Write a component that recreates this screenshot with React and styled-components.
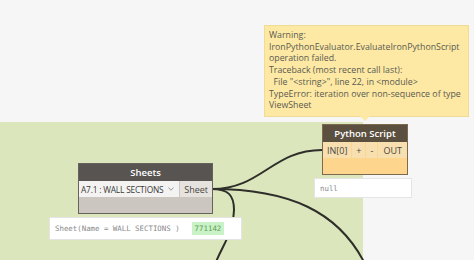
import React from "react";
import styled, { createGlobalStyle } from "styled-components";

const Global = createGlobalStyle`
  body { margin: 0; background: #f6f6f6; }
  * { box-sizing: border-box; }
`;

const Canvas = styled.div`
  position: relative;
  width: 474px;
  height: 260px;
  overflow: hidden;
  background: #f6f6f6;
  font-family: "Open Sans", "Noto Sans", sans-serif;
`;

const Group = styled.div`
  position: absolute;
  left: 0;
  top: 122px;
  width: 363px;
  height: 138px;
  background: #dce6bc;
`;

const Wires = styled.svg`
  position: absolute;
  left: 0;
  top: 0;
`;

const Tooltip = styled.div`
  position: absolute;
  left: 264px;
  top: 25px;
  width: 205px;
  height: 92px;
  padding: 4px 4px;
  background: #fde9a3;
  border: 1px solid #f0dc94;
  color: #5a5a52;
  font-size: 8.8px;
  line-height: 11.7px;
  white-space: pre;
  &::after {
    content: "";
    position: absolute;
    left: 95px;
    bottom: -5px;
    border-left: 5px solid transparent;
    border-right: 5px solid transparent;
    border-top: 5px solid #fde9a3;
  }
`;

const Node = styled.div`
  position: absolute;
  left: ${(p) => p.x}px;
  top: ${(p) => p.y}px;
  width: ${(p) => p.w}px;
  display: flex;
  flex-direction: column;
  border: 1px solid ${(p) => p.edge};
  background: ${(p) => p.body};
`;

const Header = styled.div`
  height: 17px;
  background: ${(p) => p.bg};
  color: #fff;
  font-weight: 600;
  font-size: 9.5px;
  display: flex;
  align-items: center;
  justify-content: center;
`;

const PortRow = styled.div`
  display: flex;
  height: 16px;
  gap: 1px;
  font-size: 9px;
  color: #4a4640;
  white-space: nowrap;
`;

const Port = styled.div`
  display: flex;
  align-items: center;
  justify-content: center;
  padding: 0 ${(p) => p.pad || 3}px;
  flex: ${(p) => (p.grow ? 1 : "none")};
  background: ${(p) => p.bg};
`;

const Drop = styled.div`
  flex: 1;
  min-width: 0;
  display: flex;
  align-items: center;
  justify-content: space-between;
  padding: 0 5px 0 2px;
  background: #f4f3f1;
  font-size: 8.4px;
  color: #3a3a3a;
  letter-spacing: -0.2px;
`;

const Body = styled.div`
  height: ${(p) => p.h}px;
`;

const Preview = styled.div`
  position: absolute;
  left: ${(p) => p.x}px;
  top: ${(p) => p.y}px;
  width: ${(p) => p.w}px;
  height: ${(p) => p.h}px;
  display: flex;
  align-items: center;
  gap: 12px;
  padding: 0 5px;
  background: #fff;
  border: 1px solid #e4e4e4;
  font-family: "DejaVu Sans Mono", "Liberation Mono", monospace;
  font-size: 7.4px;
  color: #8a8a8a;
  white-space: nowrap;
`;

const Tag = styled.span`
  background: #c9f2c6;
  color: #5fa05a;
  padding: 2px 3px;
`;

export default function App() {
  return (
    <Canvas>
      <Global />
      <Group />
      <Wires width="474" height="260">
        <g fill="none" stroke="#2e2e2a" strokeWidth="2">
          <path d="M212,189 C262,189 272,150 322,150" />
          <path d="M212,189 C290,189 338,212 364,262" />
          <path d="M212,189 C228,189 234,195 234,210 C234,232 222,246 216,262" />
        </g>
      </Wires>
      <Tooltip>{`Warning:
IronPythonEvaluator.EvaluateIronPythonScript
operation failed.
Traceback (most recent call last):
  File "<string>", line 22, in <module>
TypeError: iteration over non-sequence of type
ViewSheet`}</Tooltip>

      <Node x={322} y={124} w={86} edge="#7d6a4c" body="#fdd58c">
        <Header bg="#5b4f40">Python Script</Header>
        <PortRow>
          <Port bg="#f7dfb0" pad={4}>IN[0]</Port>
          <Port bg="#f7dfb0" pad={4}>+</Port>
          <Port bg="#f7dfb0" pad={4}>-</Port>
          <Port bg="#f7dfb0" grow>OUT</Port>
        </PortRow>
        <Body h={16} />
      </Node>
      <Preview x={314} y={178} w={98} h={20}>null</Preview>

      <Node x={78} y={163} w={135} edge="#66625e" body="#cbc6bf">
        <Header bg="#575452">Sheets</Header>
        <PortRow>
          <Drop>
            <span>A7.1 : WALL SECTIONS</span>
            <svg width="6" height="4" viewBox="0 0 6 4">
              <path d="M0.5,0.5 L3,3.2 L5.5,0.5" fill="none" stroke="#9a9a9a" strokeWidth="1" />
            </svg>
          </Drop>
          <Port bg="#e6e3df" pad={4}>Sheet</Port>
        </PortRow>
        <Body h={16} />
      </Node>
      <Preview x={49} y={217} w={193} h={23}>
        <span>Sheet(Name = WALL SECTIONS )</span>
        <Tag>771142</Tag>
      </Preview>
    </Canvas>
  );
}
